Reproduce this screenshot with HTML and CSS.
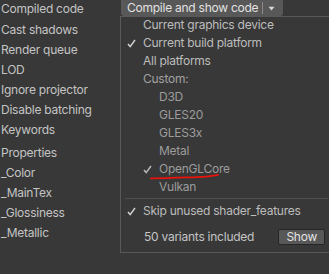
FILE: index.html
```html
<!DOCTYPE html>
<html>
<head>
<meta charset="utf-8">
<link rel="stylesheet" href="styles.css">
</head>
<body>
<div class="panel">
  <div class="row first">
    <div class="label">Compiled code</div>
    <div class="control">
      <div class="split-btn">
        <span class="btn-text">Compile and show code</span>
        <span class="btn-sep"></span>
        <span class="btn-arrow"><svg width="7" height="5" viewBox="0 0 7 5"><path d="M0.5 0.8 L6.5 0.8 L3.5 4.4 Z" fill="#d8d8d8"/></svg></span>
      </div>
      <div class="menu">
        <div class="item">Current graphics device</div>
        <div class="item checked"><svg class="check" width="9" height="9" viewBox="0 0 9 9"><path d="M1 5 L3.2 7.6 L8 1" stroke="#d0d0d0" stroke-width="1.5" fill="none"/></svg>Current build platform</div>
        <div class="item">All platforms</div>
        <div class="item dim">Custom:</div>
        <div class="item sub">D3D</div>
        <div class="item sub">GLES20</div>
        <div class="item sub">GLES3x</div>
        <div class="item sub">Metal</div>
        <div class="item sub checked"><svg class="check" width="9" height="9" viewBox="0 0 9 9"><path d="M1 5 L3.2 7.6 L8 1" stroke="#b8b8b8" stroke-width="1.5" fill="none"/></svg>OpenGLCore<svg class="scribble" width="70" height="6" viewBox="0 0 70 6"><path d="M1 4.4 C 18 4.2, 32 3.6, 47 3.1 C 56 2.8, 63 2, 68 0.9" stroke="#e8140c" stroke-width="1.8" fill="none" stroke-linecap="round"/></svg></div>
        <div class="item sub">Vulkan</div>
        <div class="divider"></div>
        <div class="item checked"><svg class="check" width="9" height="9" viewBox="0 0 9 9"><path d="M1 5 L3.2 7.6 L8 1" stroke="#d0d0d0" stroke-width="1.5" fill="none"/></svg>Skip unused shader_features</div>
        <div class="footer">
          <span class="count">50 variants included</span>
          <span class="show-btn">Show</span>
        </div>
      </div>
    </div>
  </div>
  <div class="row"><div class="label">Cast shadows</div></div>
  <div class="row"><div class="label">Render queue</div></div>
  <div class="row"><div class="label">LOD</div></div>
  <div class="row"><div class="label">Ignore projector</div></div>
  <div class="row"><div class="label">Disable batching</div></div>
  <div class="row"><div class="label">Keywords</div></div>
  <div class="row gap"><div class="label">Properties</div></div>
  <div class="row"><div class="label">_Color</div></div>
  <div class="row"><div class="label">_MainTex</div></div>
  <div class="row"><div class="label">_Glossiness</div></div>
  <div class="row"><div class="label">_Metallic</div></div>
</div>
</body>
</html>
```
FILE: styles.css
```css
html, body {
  margin: 0;
  padding: 0;
  background: #383838;
  width: 329px;
  height: 274px;
  overflow: hidden;
}
body {
  font-family: Inter, "Noto Sans", sans-serif;
  font-size: 12px;
  letter-spacing: -0.25px;
  color: #c4c4c4;
}
.panel {
  display: flex;
  flex-direction: column;
}
.row {
  display: flex;
  align-items: flex-start;
  height: 20px;
  line-height: 19px;
}
.row.first {
  line-height: 17px;
  height: 20px;
}
.row.gap {
  margin-top: 3px;
}
.label {
  width: 120px;
  padding-left: 1px;
  white-space: nowrap;
}
.control {
  position: relative;
}
.split-btn {
  display: flex;
  align-items: center;
  height: 16px;
  line-height: 16px;
  background: #585858;
  border-radius: 0 0 3px 3px;
  color: #e2e2e2;
  padding-left: 6px;
  box-sizing: border-box;
  width: 162px;
}
.btn-text {
  white-space: nowrap;
}
.btn-sep {
  width: 1px;
  height: 12px;
  background: #8a8a8a;
  margin-left: 4px;
}
.btn-arrow {
  display: flex;
  align-items: center;
  margin-left: 5px;
}
.menu {
  position: absolute;
  top: 16px;
  left: -1px;
  width: 215px;
  height: 237px;
  border: 1px solid #595959;
  background: #383838;
  box-sizing: border-box;
  padding-top: 1px;
}
.item {
  position: relative;
  height: 18px;
  line-height: 14px;
  padding-left: 22px;
  white-space: nowrap;
  color: #bdbdbd;
}
.item.dim {
  color: #a2a2a2;
}
.item.sub {
  padding-left: 38px;
  color: #9c9c9c;
}
.check {
  position: absolute;
  left: 6px;
  top: 3px;
}
.item.sub .check {
  left: 22px;
}
.scribble {
  position: absolute;
  left: 29px;
  top: 12px;
}
.divider {
  height: 1px;
  background: #4f4f4f;
  margin: 0 6px 5px 4px;
}
.footer {
  display: flex;
  align-items: center;
  justify-content: space-between;
  margin-top: 6px;
  padding-left: 23px;
  width: 204px;
  box-sizing: border-box;
}
.count {
  white-space: nowrap;
}
.show-btn {
  display: inline-block;
  background: #585858;
  border: 1px solid #262626;
  color: #e4e4e4;
  height: 14px;
  line-height: 14px;
  padding: 0 7px;
  border-radius: 2px;
}
```
